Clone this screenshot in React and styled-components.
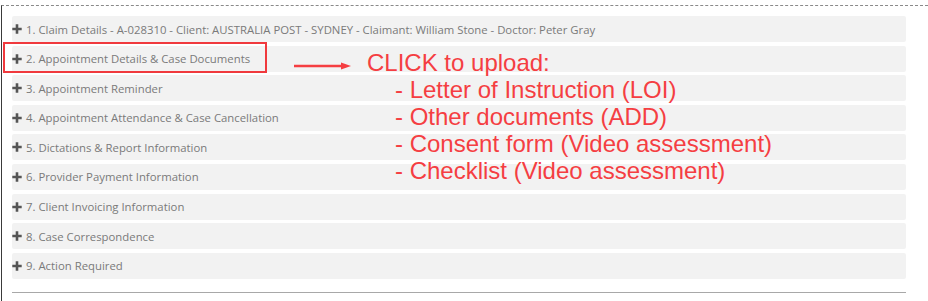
import React from "react";
import styled, { createGlobalStyle } from "styled-components";

const Global = createGlobalStyle`
  html, body { margin: 0; padding: 0; background: #fff; }
  body { width: 928px; height: 301px; overflow: hidden; }
`;

const Frame = styled.div`
  position: relative;
  margin-top: 5px;
  margin-left: 1px;
  height: 296px;
  box-sizing: border-box;
  border-top: 1px dashed #8a8a8a;
  border-left: 1px solid #3a3a3a;
  padding: 10px 0 0 10px;
`;

const Panels = styled.div`
  width: 894px;
  display: flex;
  flex-direction: column;
  gap: 3.6px;
  padding-bottom: 13px;
  border-bottom: 1px solid #a8a8a8;
`;

const Panel = styled.div`
  height: 26px;
  background: #f2f2f2;
  border-radius: 2px;
  display: flex;
  align-items: center;
  gap: 4px;
  font-family: "Open Sans", "Noto Sans", sans-serif;
  font-size: 11.35px;
  color: #7a7a7a;
  white-space: nowrap;
`;

const Plus = styled.svg`
  width: 10px;
  height: 10px;
  flex: none;
`;

const Highlight = styled.div`
  position: absolute;
  left: 1px;
  top: 36px;
  width: 264px;
  height: 31px;
  box-sizing: border-box;
  border: 2px solid #f0393d;
`;

const Note = styled.div`
  position: absolute;
  left: 291px;
  top: 43px;
  display: flex;
  align-items: flex-start;
  gap: 14px;
  font-family: "Liberation Sans", Arial, sans-serif;
  font-size: 24px;
  line-height: 27px;
  color: #f53e42;
`;

const Arrow = styled.svg`
  width: 60px;
  height: 10px;
  margin-top: 12px;
`;

const NoteLines = styled.div`
  display: flex;
  flex-direction: column;
`;

const Bullet = styled.div`
  padding-left: 28px;
`;

const items = [
  "1. Claim Details - A-028310 - Client: AUSTRALIA POST - SYDNEY - Claimant: William Stone - Doctor: Peter Gray",
  "2. Appointment Details & Case Documents",
  "3. Appointment Reminder",
  "4. Appointment Attendance & Case Cancellation",
  "5. Dictations & Report Information",
  "6. Provider Payment Information",
  "7. Client Invoicing Information",
  "8. Case Correspondence",
  "9. Action Required",
];

const PlusIcon = () => (
  <Plus viewBox="0 0 10 10">
    <path d="M3.7 0.3h2.6v3.4h3.4v2.6H6.3v3.4H3.7V6.3H0.3V3.7h3.4z" fill="#555" />
  </Plus>
);

export default function App() {
  return (
    <>
      <Global />
      <Frame>
        <Panels>
          {items.map((t) => (
            <Panel key={t}>
              <PlusIcon />
              <span>{t}</span>
            </Panel>
          ))}
        </Panels>
        <Highlight />
        <Note>
          <Arrow viewBox="0 0 60 10">
            <path d="M1 5H50" stroke="#f53e42" strokeWidth="2.4" />
            <path d="M48 1.5L58 5L48 8.5z" fill="#f53e42" />
          </Arrow>
          <NoteLines>
            <div>CLICK to upload:</div>
            <Bullet>- Letter of Instruction (LOI)</Bullet>
            <Bullet>- Other documents (ADD)</Bullet>
            <Bullet>- Consent form (Video assessment)</Bullet>
            <Bullet>- Checklist (Video assessment)</Bullet>
          </NoteLines>
        </Note>
      </Frame>
    </>
  );
}
